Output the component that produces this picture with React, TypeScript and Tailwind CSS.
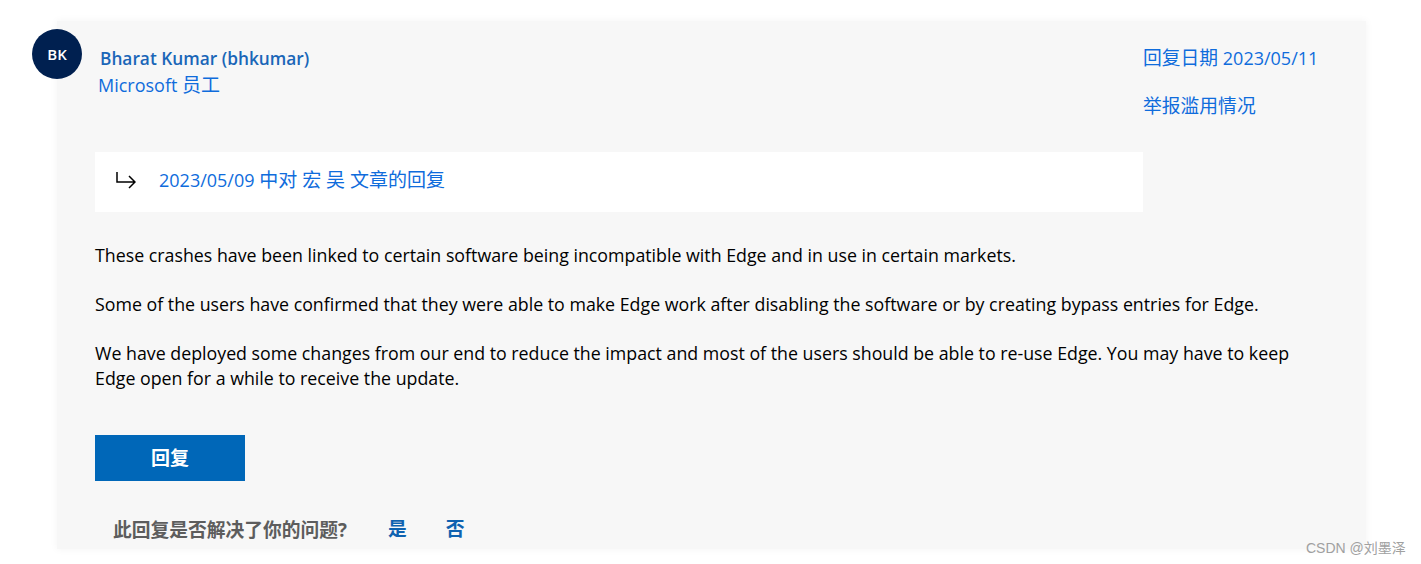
const FONT = "font-['Open_Sans','Noto_Sans_CJK_SC',sans-serif]";

const PARAGRAPHS = [
  'These crashes have been linked to certain software being incompatible with Edge and in use in certain markets.',
  'Some of the users have confirmed that they were able to make Edge work after disabling the software or by creating bypass entries for Edge.',
  'We have deployed some changes from our end to reduce the impact and most of the users should be able to re-use Edge. You may have to keep Edge open for a while to receive the update.',
];

export default function App() {
  return (
    <div className={`relative h-[564px] w-[1421px] overflow-hidden bg-white pl-[57px] pt-[21px] ${FONT}`}>
      {/* 回复卡片 */}
      <div className="relative h-[528px] w-[1309px] bg-[#f7f7f7] pl-[38px] pr-[48px] shadow-[0_0_8px_rgba(0,0,0,0.05)]">
        <div className="absolute left-[-25px] top-[8px] flex h-[50px] w-[50px] items-center justify-center rounded-full bg-[#002050] text-[15px] font-semibold text-white">
          BK
        </div>

        {/* 头부 */}
        <div className="flex h-[131px] justify-between">
          <div className="pt-[24px]">
            <p className="pl-[5px] text-[17.3px] font-semibold leading-[27px] text-[#1a66b8]">Bharat Kumar (bhkumar)</p>
            <p className="pl-[3px] text-[18px] leading-[26px] text-[#0f6cdc]">
              Microsoft <span className="text-[19px]">员工</span>
            </p>
          </div>
          <div className="w-[175px] pt-[24px] text-[18px] leading-[27px] text-[#0f6cdc]">
            <p className="whitespace-nowrap">
              <span className="text-[18.8px]">回复日期</span> 2023/05/11
            </p>
            <p className="mt-[21px] text-[18.8px]">举报滥用情况</p>
          </div>
        </div>

        {/* 引用 */}
        <div className="flex h-[60px] w-[1048px] items-center bg-white pl-[21px]">
          <svg width="20" height="18" viewBox="0 0 20 18" fill="none" stroke="#000" strokeWidth="1.5" className="mb-[4px] shrink-0">
            <path d="M1 1v10h18M13 5l6 6-6 6" />
          </svg>
          <span className="mb-[3px] ml-[23px] text-[18px] text-[#0f6cdc]">
            2023/05/09 <span className="text-[19px]">中对 宏 吴 文章的回复</span>
          </span>
        </div>

        {/* 正文 */}
        <div className="mt-[31px] flex flex-col gap-[24px] text-[17.8px] leading-[25px] text-black">
          {PARAGRAPHS.map((text) => (
            <p key={text}>{text}</p>
          ))}
        </div>

        <button className="mt-[44px] block h-[46px] w-[150px] bg-[#0067b8] text-[19px] font-bold text-white">回复</button>

        {/* 反馈 */}
        <div className="mt-[35px] flex items-center pl-[18px] text-[18.75px] font-bold">
          <span className="text-[#5d5d5d]">此回复是否解决了你的问题?</span>
          <span className="ml-[41px] -translate-y-[1px] text-[#0f62b0]">是</span>
          <span className="ml-[39px] -translate-y-[1px] text-[#0f62b0]">否</span>
        </div>
      </div>

      <span className="absolute left-[1306px] top-[538px] font-['Liberation_Sans','Noto_Sans_CJK_SC',sans-serif] text-[14px] text-[#a0a0a0]">CSDN @刘墨泽</span>
    </div>
  );
}
